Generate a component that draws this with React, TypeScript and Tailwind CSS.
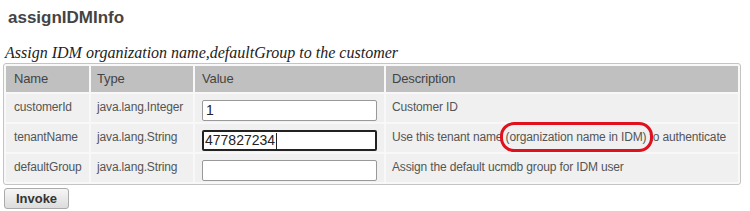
import React from "react";

const rows = [
  { name: "customerId", type: "java.lang.Integer", value: "1", desc: "Customer ID" },
  { name: "tenantName", type: "java.lang.String", value: "477827234", desc: "tenant", focused: true },
  { name: "defaultGroup", type: "java.lang.String", value: "", desc: "Assign the default ucmdb group for IDM user" },
];

export default function App() {
  return (
    <div className="h-[211px] w-[750px] overflow-hidden bg-white font-['Liberation_Sans',Arial,sans-serif] text-[#555]">
      <h1 className="pl-[8px] pt-[8px] text-[17px] font-bold leading-[20px] text-[#444]">assignIDMInfo</h1>

      <p className="mt-[15px] pl-[5px] font-['Liberation_Serif','Times_New_Roman',serif] text-[16px] italic leading-[20px] text-[#222]">
        Assign IDM organization name,defaultGroup to the customer
      </p>

      <div className="ml-[3px] w-[738px] rounded-[3px] border border-[#c4c4c4] bg-[#f8f8f8]">
        <table className="w-full table-fixed border-separate border-spacing-[2px] text-[12px] tracking-[-0.15px]">
          <colgroup>
            <col className="w-[83px]" />
            <col className="w-[102px]" />
            <col className="w-[189px]" />
            <col />
          </colgroup>
          <thead>
            <tr className="text-left text-[13px] font-normal text-[#444]">
              <th className="h-[26px] bg-[#c0c0c0] pl-[8px] font-normal">Name</th>
              <th className="h-[26px] bg-[#c0c0c0] pl-[6px] font-normal">Type</th>
              <th className="h-[26px] bg-[#c0c0c0] pl-[7px] font-normal">Value</th>
              <th className="h-[26px] bg-[#c0c0c0] pl-[6px] font-normal">Description</th>
            </tr>
          </thead>
          <tbody>
            {rows.map((r) => (
              <tr key={r.name}>
                <td className="h-[28px] whitespace-nowrap bg-[#f0f0f0] pl-[8px] pt-[4px] align-top">{r.name}</td>
                <td className="h-[28px] whitespace-nowrap bg-[#f0f0f0] pl-[6px] pt-[4px] align-top">{r.type}</td>
                <td className="h-[28px] bg-[#f0f0f0] pl-[7px] pt-[6px] align-top">
                  <div
                    className={
                      r.focused
                        ? "flex h-[21px] w-[175px] items-center rounded-[2px] border-2 border-[#222] bg-white pl-[1px] text-[14px] tracking-normal text-[#222]"
                        : "flex h-[21px] w-[175px] items-center rounded-[2px] border border-[#999] bg-white pl-[3px] text-[14px] tracking-normal text-[#222]"
                    }
                  >
                    {r.value}
                    {r.focused && <span className="ml-[1px] h-[16px] w-px bg-[#222]" />}
                  </div>
                </td>
                <td className="h-[28px] whitespace-nowrap bg-[#f0f0f0] pl-[6px] pt-[4px] align-top">
                  {r.focused ? (
                    <span>
                      Use this tenant name{" "}
                      <span className="relative">
                        (organization name in IDM)
                        <span className="absolute left-[-6px] top-[-8px] h-[30px] w-[153px] rounded-[14px] border-[3px] border-[#e0101c]" />
                      </span>{" "}
                      to authenticate
                    </span>
                  ) : (
                    r.desc
                  )}
                </td>
              </tr>
            ))}
          </tbody>
        </table>
      </div>

      <button className="ml-[4px] mt-[3px] h-[21px] w-[65px] rounded-[3px] border border-[#aaa] bg-gradient-to-b from-[#f6f6f6] to-[#dcdcdc] text-[13px] font-bold leading-[19px] text-[#333]">
        Invoke
      </button>
    </div>
  );
}
